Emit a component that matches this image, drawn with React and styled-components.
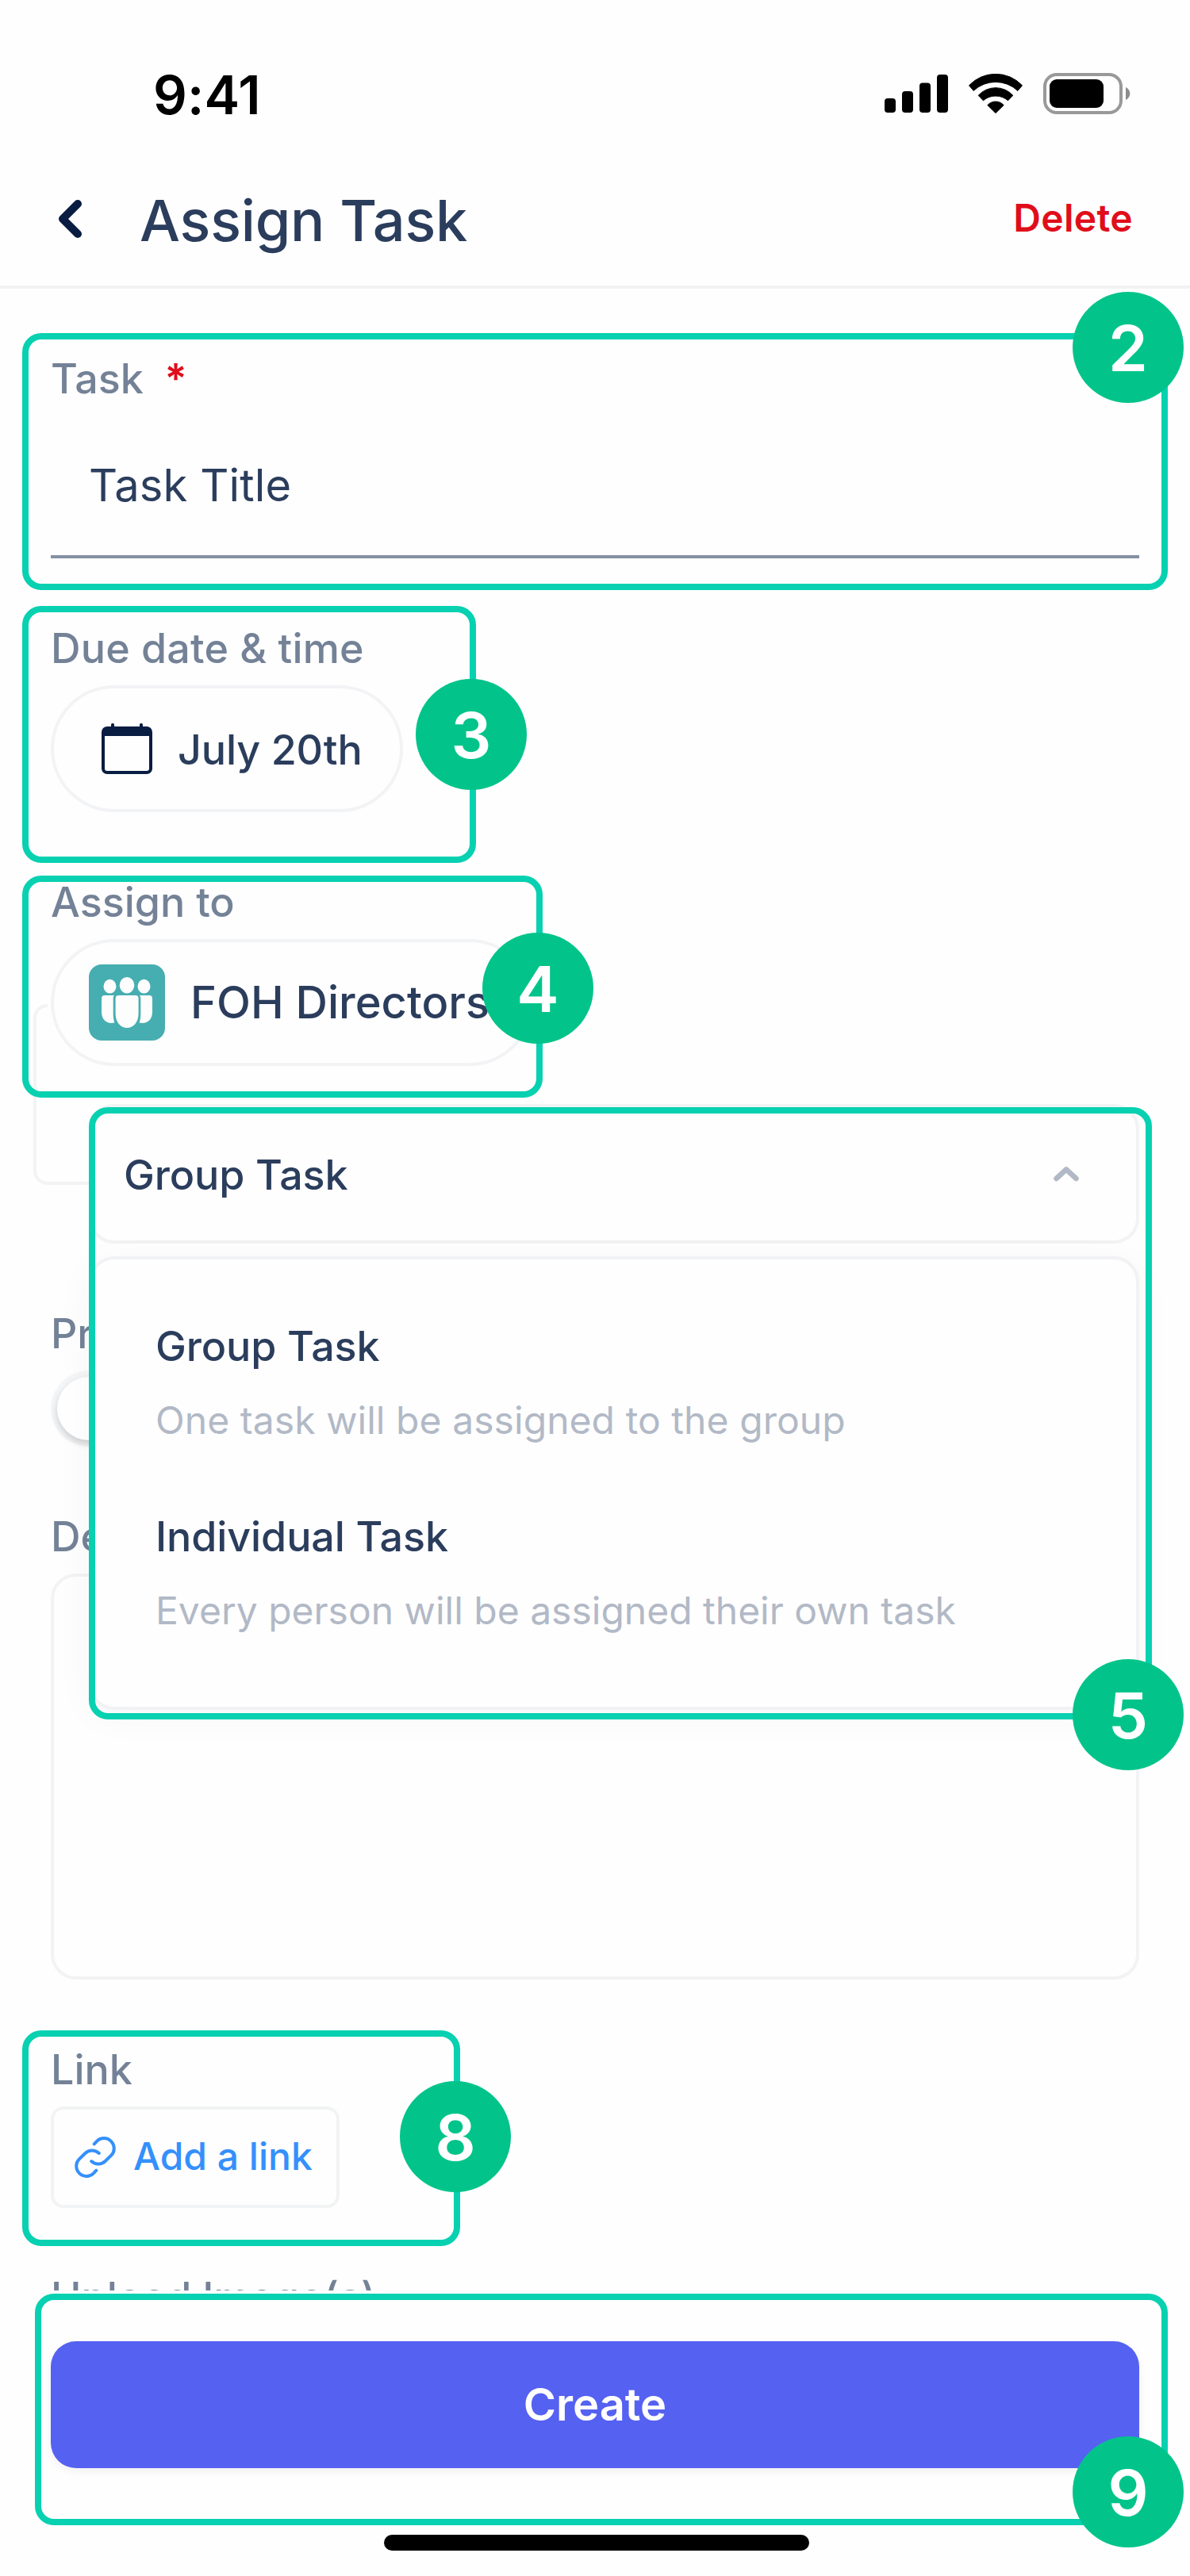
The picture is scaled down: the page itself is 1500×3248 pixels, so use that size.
import styled, { createGlobalStyle } from "styled-components";

const GlobalStyle = createGlobalStyle`
  * {
    box-sizing: border-box;
  }
  body {
    margin: 0;
    background: #fefefe;
    font-family: Inter, "Liberation Sans", sans-serif;
  }
  h1, p {
    margin: 0;
  }
  button {
    font-family: inherit;
  }
  svg {
    display: block;
    flex-shrink: 0;
  }
`;

const SignalIcon = () => (
  <svg width="80" height="48" viewBox="0 0 80 48">
    <rect x="0" y="30" width="14" height="18" rx="4" />
    <rect x="22" y="21" width="14" height="27" rx="4" />
    <rect x="44" y="10.5" width="14" height="37.5" rx="4" />
    <rect x="66" y="0" width="14" height="48" rx="4" />
  </svg>
);

const WifiIcon = () => (
  <svg width="68" height="50" viewBox="0 0 68 50">
    <g stroke="#000" strokeWidth="1" strokeLinejoin="round">
      <path d="M0.5 14.8A46 46 0 0 1 67.5 14.8L61.8 21.4A40.6 40.6 0 0 0 6.2 21.4Z" />
      <path d="M12.2 27.3A29.5 29.5 0 0 1 55.8 27.3L49.6 33.8A24 24 0 0 0 18.4 33.8Z" />
      <path d="M23.8 39.6A13.7 13.7 0 0 1 44.2 39.6L34 49.6Z" />
    </g>
  </svg>
);

const BatteryIcon = () => (
  <svg width="110" height="52" viewBox="0 0 110 52">
    <rect x="2" y="2" width="96" height="48" rx="15" fill="none" stroke="#999" strokeWidth="4" />
    <rect x="8" y="8" width="68" height="36" rx="9" />
    <path d="M104 18C107 19.3 109.3 22.4 109.3 26C109.3 29.6 107 32.7 104 34Z" fill="#8c8c8c" />
  </svg>
);

const BackIcon = () => (
  <svg width="30" height="48" viewBox="0 0 30 48">
    <path
      d="M24 5L5 24L24 43"
      fill="none"
      stroke="#091c41"
      strokeWidth="10"
      strokeLinecap="round"
      strokeLinejoin="round"
    />
  </svg>
);

const ChevronUp = () => (
  <svg width="32" height="22" viewBox="0 0 32 22">
    <path
      d="M3.5 16L16 4.5L28.5 16"
      fill="none"
      stroke="#b2b9c6"
      strokeWidth="6.5"
      strokeLinecap="round"
      strokeLinejoin="round"
    />
  </svg>
);

const CalendarIcon = () => (
  <svg width="64" height="64" viewBox="0 0 64 64">
    <g fill="#091c41">
      <rect x="12" y="0" width="4" height="8" rx="1.5" />
      <rect x="48" y="0" width="4" height="8" rx="1.5" />
      <path d="M7 4H57A7 7 0 0 1 64 11V16H0V11A7 7 0 0 1 7 4Z" />
    </g>
    <rect x="2" y="10" width="60" height="52" rx="5" fill="none" stroke="#091c41" strokeWidth="4" />
  </svg>
);

const PeopleIcon = () => (
  <svg width="96" height="96" viewBox="0 0 96 96">
    <g fill="#fdfdfd">
      <ellipse cx="26.5" cy="27.7" rx="8" ry="8.9" />
      <ellipse cx="69.5" cy="27.7" rx="8" ry="8.9" />
      <ellipse cx="48" cy="26.2" rx="9.3" ry="10.2" />
      <path d="M20 39H32C31 40.4 30.7 41.5 30.7 43V62C30.7 66.5 31.2 70.5 32.4 73.6C23 75.8 16 70 16 60V43A4 4 0 0 1 20 39Z" />
      <path d="M76 39H64C65 40.4 65.3 41.5 65.3 43V62C65.3 66.5 64.8 70.5 63.6 73.6C73 75.8 80 70 80 60V43A4 4 0 0 0 76 39Z" />
      <path d="M37.6 39H58.6A4 4 0 0 1 62.6 43V62C62.6 73 56 80 48 80C40.2 80 33.6 73 33.6 62V43A4 4 0 0 1 37.6 39Z" />
    </g>
  </svg>
);

const LinkIcon = () => (
  <svg width="52" height="52" viewBox="0 0 52 52">
    <g fill="none" stroke="#3490fc" strokeWidth="4" strokeLinecap="round" strokeLinejoin="round">
      <path d="M24.7 9.3L28.2 5.6C33 0.8 41 0.8 46 5.8C51 10.8 51 18.8 46.2 23.6L38.6 31C33.8 35.6 26.2 35.6 21.2 31" />
      <path d="M27.3 42.7L23.8 46.4C19 51.2 11 51.2 6 46.2C1 41.2 1 33.2 5.8 28.4L13.4 21C18.2 16.4 25.8 16.4 30.8 21" />
    </g>
  </svg>
);

export default function App() {
  return (
    <>
      <GlobalStyle />
      <Screen>
        <StatusBar>
          <Clock>9:41</Clock>
          <StatusIcons>
            <SignalIcon />
            <WifiIcon />
            <BatteryIcon />
          </StatusIcons>
        </StatusBar>
        <Header>
          <BackIcon />
          <h1>Assign Task</h1>
          <DeleteButton>Delete</DeleteButton>
        </Header>
        {/* ......end of header */}
        <Form>
          <Connector />
          <Callout $width={1444} $height={324} $pad={24}>
            <Label>
              Task <Required>*</Required>
            </Label>
            <TitleField>Task Title</TitleField>
            <Badge $top={-60} $right={-28}>2</Badge>
          </Callout>
          <Callout $width={572} $height={324} $pad={20} $gap={20}>
            <Label $spacing={0.2}>Due date &amp; time</Label>
            <Pill $width={444}>
              <CalendarIcon />
              <span>July 20th</span>
            </Pill>
            <Badge $top={84} $right={-72}>3</Badge>
          </Callout>
          <Callout $width={656} $height={280} $pad={0} $gap={16}>
            <Label>Assign to</Label>
            <Pill $width={608} $group>
              <Avatar>
                <PeopleIcon />
              </Avatar>
              <span>FOH Directors</span>
            </Pill>
            <Badge $top={64} $right={-72}>4</Badge>
          </Callout>
          {/* ......priority and description sit under the open menu */}
          <Field $gap={272}>
            <Label>Priority</Label>
            <Toggle>
              <Knob />
            </Toggle>
          </Field>
          <Field $gap={88}>
            <Label>Description</Label>
            <TextArea />
          </Field>
          <Callout $width={552} $height={272} $pad={16} $gap={64}>
            <Label>Link</Label>
            <LinkButton>
              <LinkIcon />
              <span>Add a link</span>
            </LinkButton>
            <Badge $top={56} $right={-72}>8</Badge>
          </Callout>
          <Field $gap={39}>
            <Label>Upload Image(s)</Label>
          </Field>
          <Dropdown>
            <SelectHead>
              Group Task
              <ChevronUp />
            </SelectHead>
            <Options>
              <Option>
                <OptionName>Group Task</OptionName>
                <OptionText $spacing={0.06}>One task will be assigned to the group</OptionText>
              </Option>
              <Option>
                <OptionName>Individual Task</OptionName>
                <OptionText>Every person will be assigned their own task</OptionText>
              </Option>
            </Options>
            <MenuOutline>
              <Badge $bottom={-72} $right={-48}>5</Badge>
            </MenuOutline>
          </Dropdown>
        </Form>
        {/* ......end of form */}
        <Footer>
          <FooterCallout>
            <CreateButton>Create</CreateButton>
            <Badge $bottom={-36} $right={-28}>9</Badge>
          </FooterCallout>
          <HomeIndicator />
        </Footer>
      </Screen>
    </>
  );
}

const Screen = styled.main`
  width: 1500px;
  height: 3248px;
  display: flex;
  flex-direction: column;
  overflow: hidden;
  background: #fefefe;
  color: #2b3d5c;
`;

const StatusBar = styled.div`
  height: 188px;
  padding: 52px 75px 0 193px;
  display: flex;
  align-items: flex-start;
  justify-content: space-between;
  color: #000;
`;

const Clock = styled.span`
  height: 136px;
  line-height: 136px;
  font-size: 67px;
  font-weight: 600;
  letter-spacing: 0.2px;
`;

const StatusIcons = styled.div`
  height: 132px;
  display: flex;
  align-items: center;
  gap: 26px;
`;

const Header = styled.header`
  height: 176px;
  padding: 4px 72px 0 74px;
  display: flex;
  align-items: center;
  border-bottom: 4px solid #f2f2f2;
  h1 {
    flex: 1;
    margin-left: 72px;
    padding-top: 4px;
    font-size: 72px;
    font-weight: 500;
    line-height: 88px;
    letter-spacing: -0.2px;
  }
`;

const DeleteButton = styled.button`
  padding: 0 0 2px;
  border: none;
  background: none;
  color: #e00e1a;
  font-size: 48px;
  font-weight: 600;
  line-height: 60px;
  letter-spacing: 0.3px;
`;
/* .............end of header styles................ */

const Form = styled.section`
  position: relative;
  height: 2524px;
  padding: 56px 28px 0;
  overflow: hidden;
`;

const Callout = styled.div`
  position: relative;
  width: ${(props) => props.$width}px;
  height: ${(props) => props.$height}px;
  margin-top: ${(props) => props.$gap || 0}px;
  padding: ${(props) => props.$pad}px 28px 0;
  border: 8px solid #07d1b1;
  border-radius: 24px;
`;

const Badge = styled.span`
  position: absolute;
  top: ${(props) => (props.$top !== undefined ? `${props.$top}px` : "auto")};
  bottom: ${(props) => (props.$bottom !== undefined ? `${props.$bottom}px` : "auto")};
  right: ${(props) => props.$right}px;
  width: 140px;
  height: 140px;
  border-radius: 50%;
  background: #02c48a;
  color: #fff;
  font-size: 80px;
  font-weight: 600;
  line-height: 141px;
  text-align: center;
`;

const Label = styled.p`
  height: 50px;
  color: #748297;
  font-size: 52px;
  font-weight: 500;
  line-height: 52px;
  letter-spacing: ${(props) => props.$spacing || 0}px;
  white-space: nowrap;
`;

const Required = styled.span`
  margin-left: 13px;
  color: #e00e1a;
  font-weight: 600;
`;

const TitleField = styled.div`
  height: 202px;
  padding: 68px 48px 0;
  border-bottom: 4px solid #8490a3;
  font-size: 56px;
  line-height: 84px;
  letter-spacing: 0.15px;
`;

const Field = styled.div`
  margin-top: ${(props) => props.$gap}px;
  padding: 0 36px;
`;

const Pill = styled.div`
  position: relative;
  width: ${(props) => props.$width}px;
  height: 160px;
  margin-top: 22px;
  padding-left: ${(props) => (props.$group ? 44 : 60)}px;
  display: flex;
  align-items: center;
  gap: 32px;
  border: 4px solid #f2f3f5;
  border-radius: 80px;
  background: #fefefe;
  box-shadow: 0 0 0 4px #fefefe;
  font-size: ${(props) => (props.$group ? 56 : 52)}px;
  font-weight: 500;
  letter-spacing: ${(props) => (props.$group ? 0 : -0.15)}px;
  white-space: nowrap;
  span {
    padding-top: ${(props) => (props.$group ? 0 : 2)}px;
  }
`;

const Avatar = styled.div`
  width: 96px;
  height: 96px;
  border-radius: 16px;
  background: #46aeb0;
`;

const Connector = styled.div`
  position: absolute;
  top: 902px;
  left: 42px;
  width: 100px;
  height: 228px;
  border: 4px solid #f2f3f4;
  border-right: none;
  border-radius: 18px 0 0 18px;
`;

const Toggle = styled.div`
  width: 160px;
  height: 96px;
  margin-top: 22px;
  padding: 8px;
  border-radius: 48px;
  background: #f4f6f8;
`;

const Knob = styled.div`
  width: 80px;
  height: 80px;
  border-radius: 50%;
  background: #fff;
  box-shadow: 0 4px 8px rgba(39, 39, 39, 0.2);
`;

const TextArea = styled.div`
  height: 512px;
  margin-top: 22px;
  border: 4px solid #f2f3f4;
  border-radius: 32px;
`;

const LinkButton = styled.button`
  width: 364px;
  height: 128px;
  margin-top: 22px;
  padding: 0 0 0 26px;
  display: flex;
  align-items: center;
  gap: 22px;
  border: 4px solid #f2f3f4;
  border-radius: 16px;
  background: #fefefe;
  color: #3490fc;
  font-size: 48px;
  font-weight: 500;
  white-space: nowrap;
  span {
    padding-bottom: 3px;
  }
`;
/* .............end of form styles................ */

const Dropdown = styled.div`
  position: absolute;
  top: 1028px;
  left: 112px;
  width: 1324px;
`;

const SelectHead = styled.div`
  height: 176px;
  padding: 2px 72px 0 40px;
  display: flex;
  align-items: center;
  justify-content: space-between;
  border: 4px solid #f2f3f4;
  border-radius: 32px;
  background: #fefefe;
  font-size: 52px;
  font-weight: 500;
  letter-spacing: -0.1px;
`;

const Options = styled.div`
  height: 572px;
  margin-top: 16px;
  padding: 80px 80px 0;
  border: 4px solid #f1f2f4;
  border-radius: 32px;
  background: #fefefe;
  box-shadow: 0 8px 48px rgba(0, 0, 0, 0.04);
`;

const Option = styled.div`
  height: 240px;
  white-space: nowrap;
`;

const OptionName = styled.p`
  font-size: 52px;
  font-weight: 500;
  line-height: 60px;
  letter-spacing: -0.1px;
`;

const OptionText = styled.p`
  margin-top: 32px;
  color: #b2b9c6;
  font-size: 48px;
  line-height: 62px;
  letter-spacing: ${(props) => props.$spacing || 0}px;
`;

const MenuOutline = styled.div`
  position: absolute;
  top: 4px;
  left: 0;
  width: 1340px;
  height: 772px;
  border: 8px solid #07d1b1;
  border-radius: 24px;
`;
/* .............end of dropdown styles................ */

const Footer = styled.footer`
  height: 360px;
  padding: 4px 28px 0 44px;
`;

const FooterCallout = styled.div`
  position: relative;
  height: 292px;
  padding: 52px 28px 0 12px;
  border: 8px solid #07d1b1;
  border-radius: 24px;
`;

const CreateButton = styled.button`
  display: block;
  width: 100%;
  height: 160px;
  padding: 0;
  border: none;
  border-radius: 32px;
  background: #5561f1;
  box-shadow: 0 4px 12px rgba(0, 0, 0, 0.06);
  color: #fff;
  font-size: 56px;
  font-weight: 600;
`;

const HomeIndicator = styled.div`
  width: 536px;
  height: 20px;
  margin: 12px 0 0 440px;
  border-radius: 10px;
  background: #000;
`;
